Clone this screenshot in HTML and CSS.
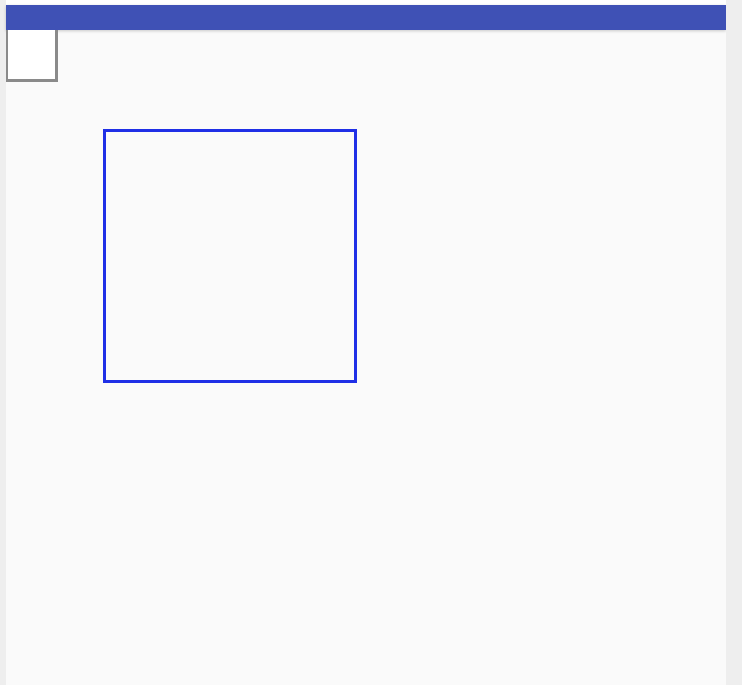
FILE: index.html
```html
<!DOCTYPE html>
<html>
<head>
<meta charset="utf-8">
<link rel="stylesheet" href="styles.css">
</head>
<body>
<div class="page">
  <div class="gutter"></div>
  <div class="main">
    <div class="appbar"></div>
    <div class="content">
      <div class="small-box"></div>
      <div class="target-box"></div>
    </div>
  </div>
  <div class="gutter gutter-right"></div>
</div>
</body>
</html>
```
FILE: styles.css
```css
html, body {
  margin: 0;
  padding: 0;
  background: #ffffff;
  font-family: "Roboto", "Liberation Sans", sans-serif;
}
.page {
  display: flex;
  width: 746px;
  height: 694px;
}
.gutter {
  width: 6px;
  height: 685px;
  background: #eeeeee;
}
.gutter-right {
  width: 16px;
}
.main {
  width: 720px;
  height: 680px;
  margin-top: 5px;
  background: #fafafa;
  display: flex;
  flex-direction: column;
}
.appbar {
  height: 25px;
  background: #3f51b5;
  box-shadow: 0 1px 3px rgba(0,0,0,0.2);
}
.content {
  position: relative;
  flex: 1;
}
.small-box {
  width: 47px;
  height: 49px;
  background: #ffffff;
  border: 2px solid #8a8a8a;
  border-top: none;
  border-right-width: 3px;
  border-bottom-width: 3px;
}
.target-box {
  width: 248px;
  height: 248px;
  margin-left: 97px;
  margin-top: 47px;
  border: 3px solid #1f2fe6;
}
```
